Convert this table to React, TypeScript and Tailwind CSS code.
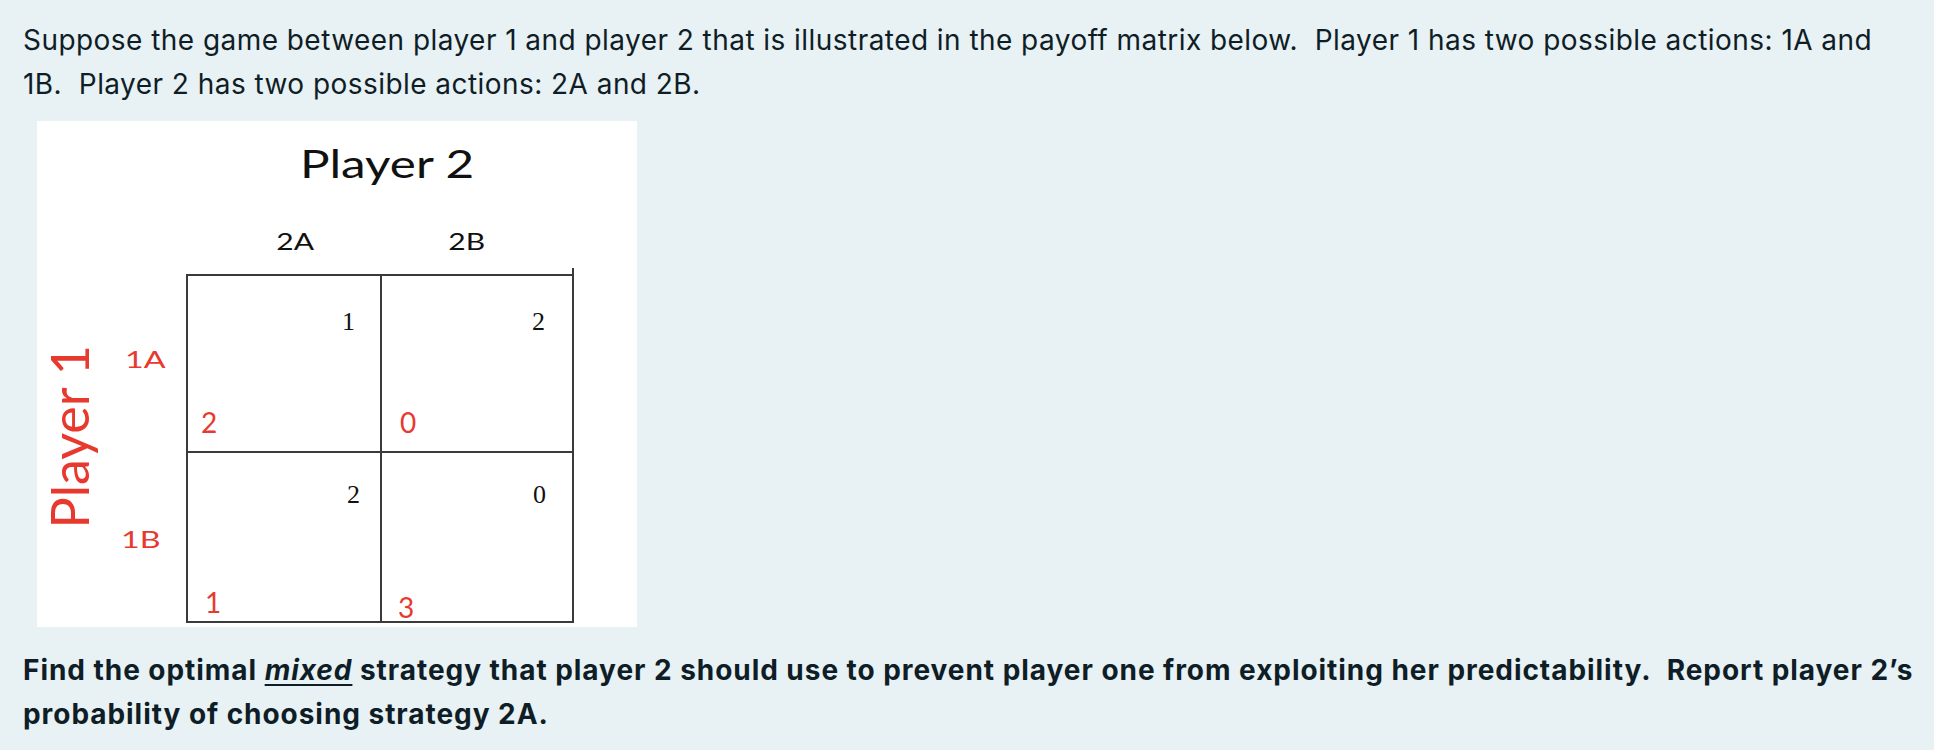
import React from 'react';

const red = 'text-[#e8392f]';

function Cell({ top, bottom, pad }: { top: string; bottom: string; pad: string }) {
  return (
    <div className={`flex flex-col justify-between bg-white ${pad}`}>
      <span className="self-end font-['Liberation_Serif',serif] text-[26px] leading-none text-[#111]">{top}</span>
      <span className={`self-start font-['Lato',sans-serif] text-[28px] leading-none ${red}`}>{bottom}</span>
    </div>
  );
}

function PayoffMatrix() {
  return (
    <div className="ml-[14px] mt-[15px] flex h-[506px] w-[600px] flex-col bg-white font-['Lato',sans-serif]">
      <div className="mt-[23px] pl-[100px] text-center">
        <span className="inline-block scale-x-[1.3] text-[38px] leading-none text-[#111]">Player 2</span>
      </div>

      <div className="mt-[40px] flex pl-[149px] text-[24px] leading-none text-[#111]">
        <div className="w-[194px] pl-[24px] text-center">
          <span className="inline-block scale-x-[1.25]">2A</span>
        </div>
        <div className="w-[194px] pr-[20px] text-center">
          <span className="inline-block scale-x-[1.25]">2B</span>
        </div>
      </div>

      <div className="mt-[21px] flex">
        {/* player 1 label */}
        <div className="w-[84px] pl-[6px]">
          <div className={`mt-[71px] rotate-180 text-[52px] leading-none [writing-mode:vertical-rl] ${red}`}>
            Player 1
          </div>
        </div>

        {/* row labels */}
        <div className={`flex w-[65px] flex-col text-[23px] leading-none ${red}`}>
          <span className="mt-[74px] ml-[4px] inline-block origin-left scale-x-[1.4]">1A</span>
          <span className="mt-[157px] inline-block origin-left scale-x-[1.4]">1B</span>
        </div>

        <div className="relative">
          <span className="absolute -top-[6px] right-0 h-[6px] w-[2px] bg-[#3a3a3a]" />
          <div className="grid grid-cols-[192px_190px] grid-rows-[175px_168px] gap-[2px] bg-[#3a3a3a] p-[2px]">
            <Cell top="1" bottom="2" pad="pt-[33px] pr-[25px] pb-[15px] pl-[13px]" />
            <Cell top="2" bottom="0" pad="pt-[33px] pr-[27px] pb-[15px] pl-[18px]" />
            <Cell top="2" bottom="1" pad="pt-[29px] pr-[20px] pb-[5px] pl-[17px]" />
            <Cell top="0" bottom="3" pad="pt-[29px] pr-[26px] pb-0 pl-[16px]" />
          </div>
        </div>
      </div>
    </div>
  );
}

export default function App() {
  return (
    <div className="h-[750px] w-full bg-[#e8f1f4] pl-[23px] pt-[18px] font-['Inter',sans-serif] text-[28px] leading-[44px] text-[#0f1e26]">
      <p className="whitespace-nowrap tracking-[0.45px]">
        Suppose the game between player 1 and player 2 that is illustrated in the payoff matrix below.{'\u00a0'} Player 1 has two possible actions: 1A and
        <br />
        1B.{'\u00a0'} Player 2 has two possible actions: 2A and 2B.
      </p>

      <PayoffMatrix />

      <p className="mt-[21px] whitespace-nowrap font-bold tracking-[0.95px]">
        Find the optimal <em className="underline decoration-2 underline-offset-4">mixed</em> strategy that player 2 should use to prevent player one from exploiting her predictability.{'\u00a0'} Report player 2’s
        <br />
        probability of choosing strategy 2A.
      </p>
    </div>
  );
}
